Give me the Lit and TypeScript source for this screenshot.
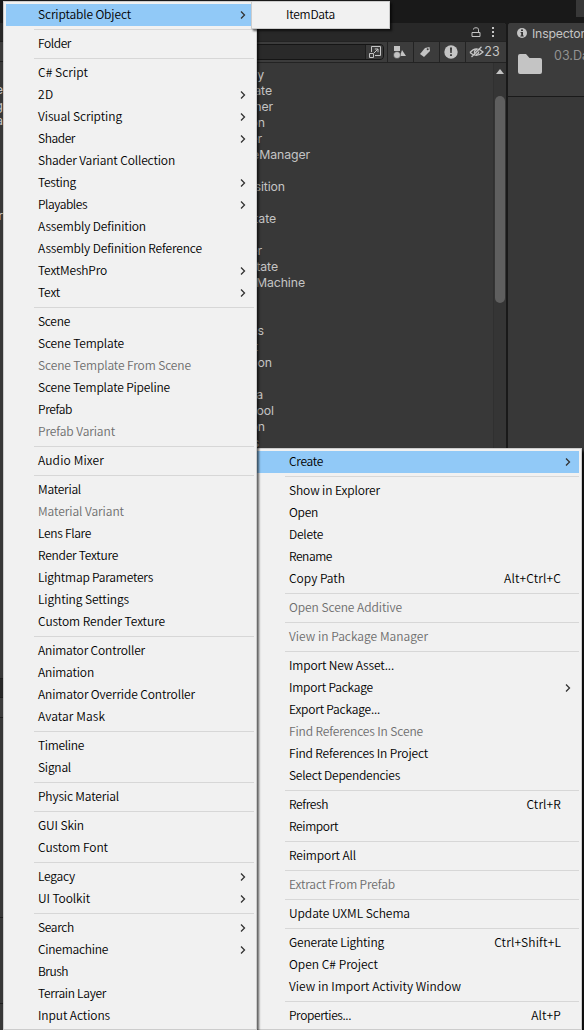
import { LitElement, html, css, nothing } from "lit";
import { customElement, property } from "lit/decorators.js";

interface Entry { label: string; width?: number; keys?: string; sub?: boolean; off?: boolean; hot?: boolean }
type Row = Entry | null;

// Suffixes: ">" opens a submenu, "~" is disabled, "*" is highlighted, "|" precedes a shortcut,
// "@" precedes the label's width in pixels, "-" is a separator.
const parse = (text: string): Row[] =>
  text.trim().split("\n").map((line) => {
    line = line.trim();
    if (line === "-") return null;
    const [main, keys] = line.split("|");
    const [name, width] = main.split("@");
    const e: Entry = { label: name, keys, width: width ? Number(width) : undefined };
    if (e.label.endsWith("*")) { e.hot = true; e.label = e.label.slice(0, -1); }
    if (e.label.endsWith(">")) { e.sub = true; e.label = e.label.slice(0, -1); }
    if (e.label.endsWith("~")) { e.off = true; e.label = e.label.slice(0, -1); }
    return e;
  });

const createMenu = parse(`Scriptable Object>*@93
-
Folder@33
-
C# Script@50
2D>@16
Visual Scripting>@84
Shader>@37
Shader Variant Collection@137
Testing>@38
Playables>@49
Assembly Definition@108
Assembly Definition Reference@164
TextMeshPro>@69
Text>@22
-
Scene@32
Scene Template@86
Scene Template From Scene~@153
Scene Template Pipeline@132
Prefab@34
Prefab Variant~@77
-
Audio Mixer@66
-
Material@43
Material Variant~@86
Lens Flare@53
Render Texture@80
Lightmap Parameters@115
Lighting Settings@91
Custom Render Texture@127
-
Animator Controller@107
Animation@56
Animator Override Controller@157
Avatar Mask@67
-
Timeline@46
Signal@33
-
Physic Material@81
-
GUI Skin@46
Custom Font@70
-
Legacy>@37
UI Toolkit>@52
-
Search>@36
Cinemachine>@70
Brush@30
Terrain Layer@68
Input Actions@72`);

const assetMenu = parse(`Create>*@34
-
Show in Explorer@91
Open@29
Delete@34
Rename@43
Copy Path@56|Alt+Ctrl+C
-
Open Scene Additive~@113
-
View in Package Manager~@139
-
Import New Asset...@105
Import Package>@84
Export Package...@91
Find References In Scene~@134
Find References In Project@139
Select Dependencies@111
-
Refresh@39|Ctrl+R
Reimport@49
-
Reimport All@67
-
Extract From Prefab~@106
-
Update UXML Schema@121
-
Generate Lighting@95|Ctrl+Shift+L
Open C# Project@89
View in Import Activity Window@172
-
Properties...@62|Alt+P`);

@customElement("popup-menu")
class PopupMenu extends LitElement {
  @property({ attribute: false }) rows: Row[] = [];
  static styles = css`
    :host { display: block; box-sizing: border-box; background: #f1f1f1; border: 1px solid #ccc;
      padding: 2px; box-shadow: 2px 2px 2px rgba(0,0,0,.6);
      font: 350 12px/20px "Noto Sans CJK KR", "Noto Sans", sans-serif; color: #000; }
    .row { display: flex; justify-content: space-between; height: 22px; box-sizing: border-box; padding-left: 32px; padding-right: 18px; white-space: pre; }
    .hot { background: #91c9f7; }
    .off { color: #6d6d6d; }
    .keys { letter-spacing: .15px; }
    .chev { width: 6px; height: 10px; margin: 6px -10px 0 0; }
    .sep { height: 7px; padding: 3px 0 0 28px; box-sizing: border-box; }
    .line { height: 1px; background: #d7d7d7; }
  `;
  render() {
    return this.rows.map((r) => r === null
      ? html`<div class="sep"><div class="line"></div></div>`
      : html`<div class="row ${r.hot ? "hot" : ""} ${r.off ? "off" : ""}">
          <span class="label" data-width=${r.width ?? nothing}>${r.label}</span>${r.keys ? html`<span class="keys">${r.keys}</span>` : nothing}${r.sub
            ? html`<svg class="chev" viewBox="0 0 6 10"><path d="M1 1.500L4.500 5L1 8.500" fill="none" stroke="#333" stroke-width="1.300"/></svg>` : nothing}
        </div>`);
  }
  updated() {
    // Track each label so that it fills its own width.
    this.renderRoot.querySelectorAll<HTMLElement>(".label[data-width]").forEach((el) => {
      const goal = Number(el.dataset.width);
      const gap = (goal - el.getBoundingClientRect().width) / el.textContent!.length;
      el.style.letterSpacing = `${Math.max(-0.5, Math.min(0.5, gap)).toFixed(3)}px`;
    });
  }
}

const fragments: [string, number][] = [
  ["Enemy", 264], ["EnemyState", 272], ["Spawner", 273], ["Button", 265], ["Player", 262],
  ["StateManager", 310], ["", 0], ["Transition", 285], ["", 0], ["IdleState", 276], ["", 0],
  ["Player", 262], ["PlayerState", 278], ["StateMachine", 305], ["", 0], ["", 0], ["Items", 264],
  ["Object", 258], ["Weapon", 272], ["", 0], ["Data", 263], ["ObjectPool", 274], ["Button", 265], ["Utils", 259],
];

@customElement("app-root")
class AppRoot extends LitElement {
  static styles = css`
    :host { display: block; position: relative; width: 584px; height: 1030px; overflow: hidden;
      background: #191919; font: 12.5px/16px Inter, sans-serif; color: #c4c4c4; }
    .editor { display: flex; height: 1030px; box-sizing: border-box; padding-top: 23px; gap: 2px; }
    .project { width: 506px; background: #383838; display: flex; flex-direction: column; border-radius: 0 3px 0 0; overflow: hidden; }
    .tabs { height: 18px; background: #282828; display: flex; justify-content: flex-end; gap: 10px; padding-right: 11px; flex: none; }
    .tabs svg { margin-top: 4px; }
    .tools { height: 20px; background: #3c3c3c; border-top: 1px solid #232323; border-bottom: 1px solid #232323; display: flex; justify-content: flex-end; flex: none; }
    .search { width: 183px; height: 14px; margin: 2px 3px 0 0; background: #2a2a2a; border: 1px solid #151515; border-radius: 0 4px 4px 0; display: flex; justify-content: flex-end; }
    .pick { width: 17px; background: #3a3a3a; border-left: 1px solid #1c1c1c; display: flex; align-items: center; justify-content: center; border-radius: 0 3px 3px 0; }
    .tool { width: 26px; box-sizing: border-box; border-left: 1px solid #232323; display: flex; justify-content: center; align-items: center; padding-right: 3px; }
    .tool.eye { width: 41px; gap: 0; }
    .body { flex: 1; display: flex; }
    .list { flex: 1; padding-top: 4px; font-size: 12.3px; letter-spacing: -.1px; }
    .item { height: 16px; text-align: right; white-space: pre; }
    .scroll { width: 12px; border-left: 1px solid #303030; background: #353535; display: flex; flex-direction: column; align-items: center; }
    .arrow { margin-top: 6px; flex: none; }
    .thumb { width: 10px; height: 207px; margin-top: 22px; border-radius: 5px; background: #5f5f5f; flex: none; }
    .inspector { width: 76px; background: #383838; border-radius: 3px 0 0 0; overflow: hidden; white-space: nowrap; }
    .title { height: 19px; background: #3c3c3c; display: flex; gap: 5px; padding: 2px 0 0 9px; box-sizing: border-box; font-size: 12.3px; letter-spacing: -.2px; }
    .title svg { margin-top: 3px; flex: none; }
    .title span { margin-top: 1px; }
    .head { height: 54px; background: #3c3c3c; border-bottom: 1px solid #1a1a1a; display: flex; gap: 12px; padding-left: 10px; color: #929292; }
    .head svg { margin-top: 12px; flex: none; }
    .head span { margin-top: 6px; }
    .window-edge { position: absolute; left: 576px; top: 0; width: 8px; height: 17px; background: #383838; }
    .dock { position: absolute; left: 0; top: 23px; width: 3px; height: 1007px; display: flex; flex-direction: column; overflow: hidden; }
    .dock div { box-sizing: border-box; border-bottom: 1px solid #1f1f1f; flex: none; background: #383838; direction: rtl; }
    .dock .bar { height: 19px; background: #282828; }
    .dock .strip { height: 20px; background: #3c3c3c; }
    .dock .tree { height: 617px; padding-top: 20px; }
    .dock .files { height: 200px; padding-top: 4px; }
    .dock .foot { height: 86px; }
    .dock span { display: block; height: 15.600px; }
    .dock .late { padding-top: 79px; }
    .assets { position: absolute; left: 254px; top: 448px; width: 328px; height: 582px; box-shadow: 3px 3px 3px rgba(0,0,0,.85); }
    .create { position: absolute; left: 3px; top: 1px; width: 254px; height: 1029px; }
    .leaf { position: absolute; left: 251px; top: 1px; width: 139px; height: 28px; }
  `;
  render() {
    return html`
      <div class="editor">
        <section class="project">
          <div class="tabs">
            <svg width="10" height="11" viewBox="0 0 10 11" fill="none" stroke="#c4c4c4"><path d="M1 5.500h8v4H1zM2.500 2.500c0-1.500 1-1.700 2.500-1.700s2.500.2 2.500 2v2.500"/></svg>
            <svg width="4" height="11" viewBox="0 0 4 11" fill="#c4c4c4"><path d="M1 0h2v2H1zM1 4h2v2H1zM1 8h2v2H1z"/></svg>
          </div>
          <div class="tools">
            <div class="search"><div class="pick"><svg width="12" height="12" viewBox="0 0 12 12" fill="none" stroke="#c4c4c4"><path d="M2.500 6V.5h9v9H6M.5 7.500h4v4h-4zM5 7l4-4M5.800 3H9v3.200"/></svg></div></div>
            <div class="tool"><svg width="13" height="13" viewBox="0 0 13 13" fill="#c4c4c4"><path d="M1 0h6v5H1zM9 4l4 6H7z"/><circle cx="4" cy="9" r="3.500" stroke="#3c3c3c" stroke-width=".6"/></svg></div>
            <div class="tool"><svg width="12" height="12" viewBox="0 0 12 12"><path d="M1 8L6 2L10.500 1L11 5L5 11Z" fill="#c4c4c4"/><circle cx="8.700" cy="3.200" r="1" fill="#3c3c3c"/></svg></div>
            <div class="tool"><svg width="14" height="14" viewBox="0 0 14 14"><circle cx="7" cy="7" r="6.700" fill="#c4c4c4"/><path d="M6 2.500h2L7.700 8H6.300zM6.100 9.300h1.800v1.800H6.100z" fill="#333"/></svg></div>
            <div class="tool eye"><svg width="15" height="12" viewBox="0 0 15 12" fill="none" stroke="#c4c4c4" stroke-width="1.300"><path d="M1 6.500Q7-.5 14 6Q7.500 12.500 1 6.500M2.500 11L12.500.8"/><path d="M5.500 7.500Q5 4 8 3.500M7 8.500Q9.500 8.500 9.800 5.500"/></svg><span>23</span></div>
          </div>
          <div class="body">
            <div class="list">${fragments.map(([t, right]) => html`<div class="item" style="width:${right}px">${t}</div>`)}</div>
            <div class="scroll"><svg class="arrow" width="8" height="5" viewBox="0 0 8 5"><path d="M0 5L4 0L8 5Z" fill="#c4c4c4"/></svg><div class="thumb"></div></div>
          </div>
        </section>
        <section class="inspector">
          <div class="title"><svg width="10" height="10" viewBox="0 0 10 10"><circle cx="5" cy="5" r="5" fill="#c4c4c4"/><path d="M4 1.500h2v1.600H4zM3.600 4H6v3.500h.7v1H3.400v-1h.8V5h-.6z" fill="#333"/></svg><span>Inspector</span></div>
          <div class="head"><svg width="24" height="20" viewBox="0 0 24 20"><path d="M0 2Q0 0 2 0H8L11.500 4H22Q24 4 24 6V18Q24 20 22 20H2Q0 20 0 18Z" fill="#c4c4c4"/></svg><span>03.Da</span></div>
        </section>
      </div>
      <div class="window-edge"></div>
      <div class="dock">
        <div class="bar"></div><div class="strip"></div>
        <div class="tree"><span>e</span><span>g</span><span>a</span><span class="late">r</span></div>
        <div class="bar"></div><div class="strip"></div>
        <div class="files"></div><div class="foot"></div>
      </div>
      <popup-menu class="assets" .rows=${assetMenu}></popup-menu>
      <popup-menu class="create" .rows=${createMenu}></popup-menu>
      <popup-menu class="leaf" .rows=${parse("ItemData@49")}></popup-menu>
    `;
  }
}
